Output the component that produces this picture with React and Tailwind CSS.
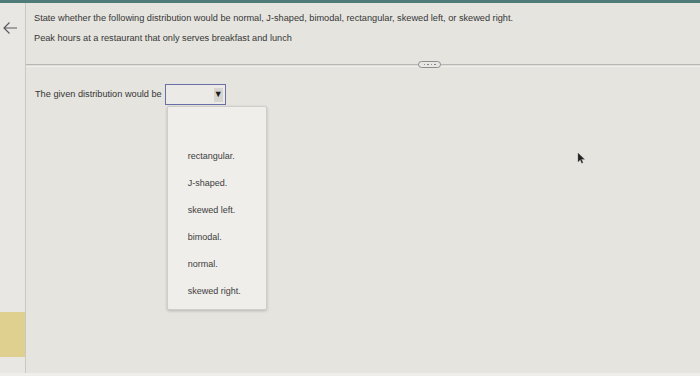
import React from 'react';

const options = ['rectangular.', 'J-shaped.', 'skewed left.', 'bimodal.', 'normal.', 'skewed right.'];

function BackArrow() {
  return (
    <svg width="16" height="14" viewBox="0 0 16 14" fill="none" stroke="#5a5d60" strokeWidth="1.2">
      <path d="M15 7H2M7.5 1.5L2 7l5.5 5.5" />
    </svg>
  );
}

function Cursor() {
  return (
    <svg width="8" height="12" viewBox="0 0 8 12">
      <path d="M1 1v9l2.2-2.2 1.6 3.4 1.2-.6-1.6-3.3H7.5z" fill="#222" stroke="#666" strokeWidth="0.4" />
    </svg>
  );
}

export default function App() {
  return (
    <div
      className="w-[700px] h-[376px] overflow-hidden flex flex-col bg-[#e5e4df] text-[#363636]"
      style={{ fontFamily: '"Liberation Sans", Arial, sans-serif' }}
    >
      <div className="h-[3px] bg-[#4f7c79] shrink-0" />
      <div className="flex flex-1 min-h-0">
        {/* left rail */}
        <div className="w-[26px] shrink-0 flex flex-col bg-[#e8e7e3] border-r border-[#c9c8c3]">
          <div className="pt-[18px] pl-[2px]">
            <BackArrow />
          </div>
          <div className="flex-1" />
          <div className="h-[45px] bg-[#dfd08f]" />
          <div className="h-[16px]" />
        </div>

        {/* main */}
        <div className="flex-1 flex flex-col relative">
          <div className="pl-[8px] pt-[10px] h-[61px]">
            <p className="text-[9.2px] leading-[11px]">
              State whether the following distribution would be normal, J-shaped, bimodal, rectangular, skewed left, or skewed right.
            </p>
            <p className="text-[9.2px] leading-[11px] mt-[9px]">
              Peak hours at a restaurant that only serves breakfast and lunch
            </p>
          </div>
          <div className="relative h-[3px] border-t border-[#b9b8b4] bg-[#dcdbd6] border-b border-b-[#f2f1ee]">
            <div className="absolute left-[392px] top-[-4px] w-[23px] h-[7px] rounded-full border border-[#8d8e92] bg-[#e7e6e2] flex items-center justify-center gap-[2px]">
              <span className="w-[1.5px] h-[1.5px] bg-[#777] rounded-full" />
              <span className="w-[1.5px] h-[1.5px] bg-[#777] rounded-full" />
              <span className="w-[1.5px] h-[1.5px] bg-[#777] rounded-full" />
              <span className="w-[1.5px] h-[1.5px] bg-[#777] rounded-full" />
            </div>
          </div>

          <div className="pl-[9px] pt-[17px] flex items-start">
            <span className="text-[9.2px] leading-[21px] mr-[3px]">The given distribution would be</span>
            <div className="relative">
              <div className="w-[61px] h-[21px] border-[1.5px] border-[#6a70a6] bg-[#eceae6] flex justify-end items-center pr-[2px]">
                <div className="w-[9px] h-[14px] bg-[#d6d5d1] flex items-center justify-center text-[9px] leading-none text-[#1e1e1e]">▼</div>
              </div>
              <div className="absolute left-[2px] top-[22px] w-[100px] h-[204px] bg-[#efeeea] border border-[#cfcecb] rounded-[2px] shadow-[0_1px_3px_rgba(0,0,0,0.2)] pl-[20px] pt-[43px] flex flex-col gap-[15px]">
                {options.map((o) => (
                  <div key={o} className="text-[9px] leading-[12px] text-[#3d3d3d]">{o}</div>
                ))}
              </div>
            </div>
          </div>

          <div className="absolute left-[551px] top-[149px]">
            <Cursor />
          </div>
        </div>
      </div>
      <div className="h-[3px] bg-[#efeeeb] shrink-0" />
    </div>
  );
}
